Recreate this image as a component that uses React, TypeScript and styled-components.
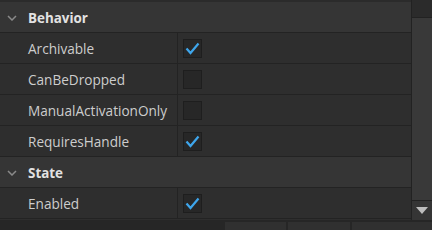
import React from "react";
import styled, { createGlobalStyle } from "styled-components";

const Global = createGlobalStyle`
  html, body { margin: 0; padding: 0; background: #262626; overflow: hidden; }
  * { box-sizing: border-box; }
`;

const Root = styled.div`
  width: 432px;
  height: 230px;
  display: flex;
  flex-direction: column;
  font-family: "Open Sans", "Noto Sans", sans-serif;
`;

const Body = styled.div`
  display: flex;
  height: 220px;
`;

const List = styled.div`
  flex: 1;
  display: flex;
  flex-direction: column;
  border-right: 1px solid #222;
  background: #2e2e2e;
`;

const TopStrip = styled.div`
  height: 2px;
  background: #2b2b2b;
`;

const HeaderRow = styled.div`
  height: 31px;
  display: flex;
  align-items: center;
  background: #353535;
  border-bottom: 1px solid #232323;
  color: #e2e2e2;
  font-weight: 700;
  font-size: 13.4px;
  padding-top: 1px;
`;

const Chevron = styled.span`
  width: 28px;
  display: flex;
  justify-content: center;
  padding-right: 4px;
`;

const PropRow = styled.div`
  height: 31px;
  display: flex;
  border-bottom: 1px solid #232323;
  background: #2e2e2e;
`;

const NameCell = styled.div`
  width: 177px;
  padding-left: 28px;
  padding-top: 1px;
  display: flex;
  align-items: center;
  color: #cdcdcd;
  font-size: 13.6px;
`;

const ValueCell = styled.div`
  flex: 1;
  border-left: 1px solid #232323;
  display: flex;
  align-items: center;
  padding-left: 5px;
`;

const Box = styled.div`
  width: 19px;
  height: 19px;
  background: #272727;
  border: 1px solid #1e1e1e;
  display: flex;
  align-items: center;
  justify-content: center;
`;

const Scrollbar = styled.div`
  width: 20px;
  display: flex;
  flex-direction: column;
  background: #2b2b2b;
`;

const ScrollTop = styled.div`
  height: 18px;
  background: #2b2b2b;
  border-bottom: 1px solid #222;
`;

const Thumb = styled.div`
  flex: 1;
  background: #393939;
  border-bottom: 1px solid #222;
`;

const ScrollBtn = styled.div`
  height: 19px;
  background: #353535;
  display: flex;
  align-items: center;
  justify-content: center;
`;

const Bottom = styled.div`
  height: 10px;
  background: #262626;
  display: flex;
  gap: 2px;
  padding: 2px 0 0 225px;
`;

const Tab = styled.div<{ $w: number }>`
  width: ${(p) => p.$w}px;
  background: #303030;
`;

const ChevronIcon = () => (
  <svg width="10" height="6" viewBox="0 0 10 6">
    <path d="M1 1 L5 5 L9 1" fill="none" stroke="#8a8a8a" strokeWidth="1.5" />
  </svg>
);

const Check = () => (
  <svg width="15" height="13" viewBox="0 0 15 13">
    <path d="M1.5 6.5 L5.5 11 L13.5 1.5" fill="none" stroke="#3ea6ec" strokeWidth="2.2" />
  </svg>
);

const Header = ({ title }: { title: string }) => (
  <HeaderRow>
    <Chevron>
      <ChevronIcon />
    </Chevron>
    {title}
  </HeaderRow>
);

const Prop = ({ name, checked }: { name: string; checked: boolean }) => (
  <PropRow>
    <NameCell>{name}</NameCell>
    <ValueCell>
      <Box>{checked && <Check />}</Box>
    </ValueCell>
  </PropRow>
);

export default function App() {
  return (
    <Root>
      <Global />
      <Body>
        <List>
          <TopStrip />
          <Header title="Behavior" />
          <Prop name="Archivable" checked />
          <Prop name="CanBeDropped" checked={false} />
          <Prop name="ManualActivationOnly" checked={false} />
          <Prop name="RequiresHandle" checked />
          <Header title="State" />
          <Prop name="Enabled" checked />
        </List>
        <Scrollbar>
          <ScrollTop />
          <Thumb />
          <ScrollBtn>
            <svg width="12" height="7" viewBox="0 0 12 7">
              <path d="M0 0 H12 L6 7 Z" fill="#bdbdbd" />
            </svg>
          </ScrollBtn>
        </Scrollbar>
      </Body>
      <Bottom>
        <Tab $w={61} />
        <Tab $w={62} />
        <Tab $w={80} />
      </Bottom>
    </Root>
  );
}
